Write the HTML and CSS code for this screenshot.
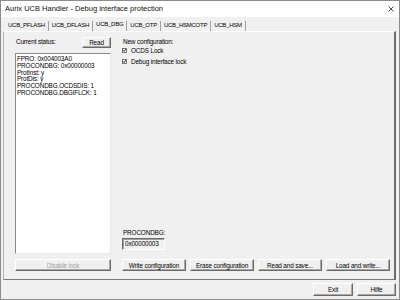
FILE: index.html
```html
<!DOCTYPE html>
<html>
<head>
<meta charset="utf-8">
<link rel="stylesheet" href="styles.css">
</head>
<body>
<div class="window">
  <div class="titlebar">
    <span class="title">Aurix UCB Handler - Debug interface protection</span>
    <svg class="close" width="6" height="6" viewBox="0 0 6 6"><path d="M0.5 0.5 L5.5 5.5 M5.5 0.5 L0.5 5.5" stroke="#222" stroke-width="0.8" fill="none"/></svg>
  </div>
  <div class="tabs">
    <div class="tab">UCB_PFLASH</div>
    <div class="tab">UCB_DFLASH</div>
    <div class="tab active">UCB_DBG</div>
    <div class="tab">UCB_OTP</div>
    <div class="tab">UCB_HSMCOTP</div>
    <div class="tab">UCB_HSM</div>
  </div>
  <div class="panel">
    <div class="left">
      <div class="status-head">
        <span class="label">Current status:</span>
        <button class="btn read">Read</button>
      </div>
      <div class="status">
        <div>FPRO: 0x004003A0</div>
        <div>PROCONDBG: 0x00000003</div>
        <div>ProtInst: y</div>
        <div>ProtDis: y</div>
        <div>PROCONDBG.OCDSDIS: 1</div>
        <div>PROCONDBG.DBGIFLCK: 1</div>
      </div>
    </div>
    <div class="right">
      <div class="label newcfg">New configuration:</div>
      <div class="check"><svg width="5" height="5" viewBox="0 0 5 5"><rect x="0.5" y="0.5" width="4" height="4" fill="#fff" stroke="#555" stroke-width="0.8"/><path d="M1.1 2.4 L2 3.4 L3.9 1.2" stroke="#000" stroke-width="0.9" fill="none"/></svg><span>OCDS Lock</span></div>
      <div class="check"><svg width="5" height="5" viewBox="0 0 5 5"><rect x="0.5" y="0.5" width="4" height="4" fill="#fff" stroke="#555" stroke-width="0.8"/><path d="M1.1 2.4 L2 3.4 L3.9 1.2" stroke="#000" stroke-width="0.9" fill="none"/></svg><span>Debug interface lock</span></div>
      <div class="spacer"></div>
      <div class="label proc">PROCONDBG:</div>
      <div class="field">0x00000003</div>
    </div>
    <div class="left-btns">
      <button class="btn disabled wide">Disable lock</button>
    </div>
    <div class="right-btns">
      <button class="btn act">Write configuration</button>
      <button class="btn act">Erase configuration</button>
      <button class="btn act">Read and save...</button>
      <button class="btn act">Load and write...</button>
    </div>
  </div>
  <div class="bottom">
    <button class="btn exit">Exit</button>
    <button class="btn help">Hilfe</button>
  </div>
</div>
</body>
</html>
```
FILE: styles.css
```css
html, body {
  margin: 0;
  padding: 0;
  background: #f0f0f0;
}
.window {
  width: 400px;
  height: 300px;
  box-sizing: border-box;
  border: 1px solid #8c8c8c;
  background: #f0f0f0;
  display: flex;
  flex-direction: column;
  font-family: "Liberation Sans", Arial, sans-serif;
  font-size: 6.4px;
  letter-spacing: -0.15px;
  color: #000;
}
.titlebar {
  height: 16px;
  flex: none;
  background: #fff;
  display: flex;
  align-items: center;
  justify-content: space-between;
  padding: 0 5px 0 4px;
}
.title {
  font-size: 7.5px;
  letter-spacing: 0;
  color: #111;
  margin-top: -1px;
}
.close {
  margin-top: -1px;
}
.tabs {
  height: 14px;
  flex: none;
  display: flex;
  align-items: flex-end;
  padding-left: 4px;
}
.tab {
  height: 10px;
  line-height: 9px;
  padding: 0 3px;
  border-right: 1px solid #a0a0a0;
  font-size: 6px;
  letter-spacing: -0.25px;
}
.tab.active {
  line-height: 7px;
}
.panel {
  flex: 1;
  margin: 0 3px 0 2px;
  border-style: solid;
  border-width: 1px 2px 1px 1px;
  border-color: #fff #6e6e6e #7a7a7a #b4b4b4;
  padding: 5px 3px 8px 11px;
  display: grid;
  grid-template-columns: 96px 1fr;
  grid-template-rows: 1fr 12px;
  column-gap: 11px;
  row-gap: 5px;
}
.left {
  display: flex;
  flex-direction: column;
  min-height: 0;
}
.status-head {
  height: 16px;
  display: flex;
  align-items: flex-start;
  justify-content: space-between;
}
.label {
  line-height: 10px;
  padding-left: 1px;
}
.btn {
  font: inherit;
  letter-spacing: inherit;
  color: #000;
  background: #f0f0f0;
  box-sizing: border-box;
  border-style: solid;
  border-width: 1px;
  border-color: #fff #6a6a6a #6a6a6a #fff;
  box-shadow: inset -1px -1px 0 #a8a8a8;
  padding: 0;
  margin: 0;
  text-align: center;
}
.read {
  width: 29px;
  height: 11px;
}
.status {
  flex: 1;
  background: #fff;
  border-style: solid;
  border-width: 1px;
  border-color: #8a8a8a #e8e8e8 #e8e8e8 #8a8a8a;
  padding: 2px 1px;
  line-height: 6.8px;
  color: #000;
}
.right {
  display: flex;
  flex-direction: column;
}
.newcfg {
  height: 8px;
}
.check {
  height: 11px;
  display: flex;
  align-items: center;
  gap: 4px;
}
.spacer {
  flex: 1;
}
.proc {
  line-height: 9px;
  margin-bottom: 1px;
}
.field {
  width: 43px;
  height: 12px;
  box-sizing: border-box;
  border-style: solid;
  border-width: 1px;
  border-color: #6a6a6a #fff #fff #6a6a6a;
  box-shadow: inset 1px 1px 0 #a0a0a0;
  background: #f0f0f0;
  line-height: 10px;
  padding-left: 2px;
  margin-bottom: 4px;
}
.left-btns {
  display: flex;
}
.wide {
  width: 96px;
  height: 12px;
}
.disabled {
  color: #a0a0a0;
}
.right-btns {
  display: flex;
  gap: 4px;
}
.act {
  width: 64px;
  height: 12px;
}
.bottom {
  height: 19px;
  flex: none;
  display: flex;
  justify-content: flex-end;
  align-items: flex-start;
  gap: 4px;
  padding: 3px 3px 0 0;
  box-sizing: border-box;
}
.exit {
  width: 40px;
  height: 13px;
}
.help {
  width: 39px;
  height: 13px;
}
```
